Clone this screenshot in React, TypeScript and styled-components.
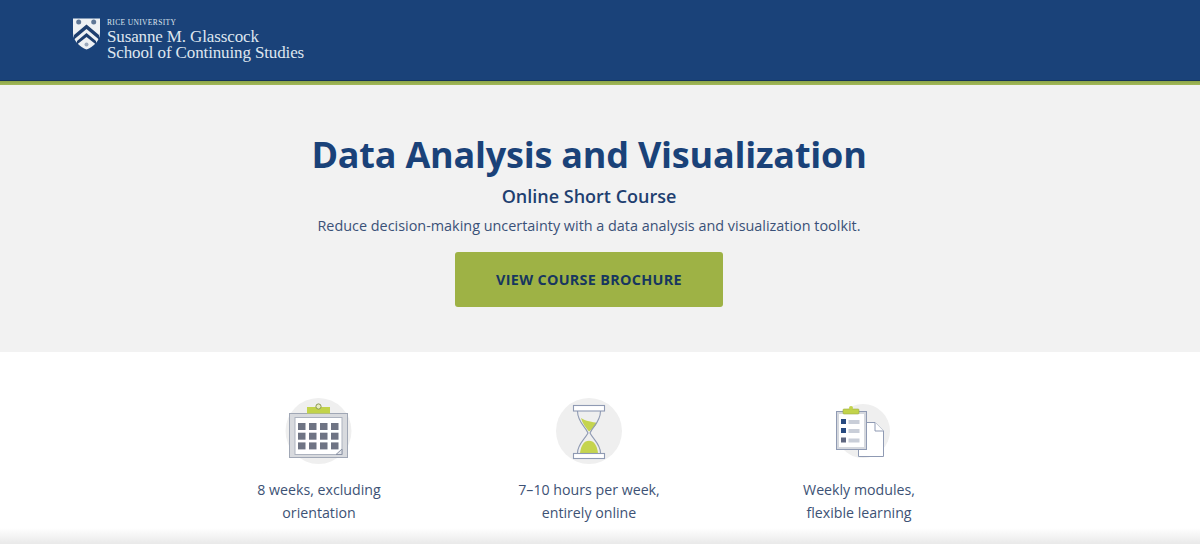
import React from "react";
import styled, { createGlobalStyle } from "styled-components";

const Global = createGlobalStyle`
  html, body { margin: 0; padding: 0; background: #fff; }
  body { font-family: "Open Sans", "Liberation Sans", sans-serif; overflow: hidden; }
`;
const Page = styled.div`
  width: 1200px; height: 544px; overflow: hidden; position: relative;
  display: flex; flex-direction: column;
`;
const Header = styled.header`
  height: 81px; flex: none; box-sizing: border-box; background: #1a4279;
  border-bottom: 1px solid #163459;
  display: flex; align-items: flex-start; padding: 18px 0 0 73px; gap: 7px;
`;
const Strip = styled.div`
  height: 4px; flex: none; background: linear-gradient(to bottom, #8ea648, #a3b95a);
`;
const Wordmark = styled.div`
  display: flex; flex-direction: column; color: #dfe6ef;
  font-family: "Liberation Serif", serif;
`;
const Uni = styled.span`
  font-size: 7.5px; line-height: 8px; letter-spacing: 0.35px; margin-top: 1px; margin-bottom: 2px;
`;
const Line = styled.span`
  font-size: 17px; line-height: 16px; letter-spacing: -0.13px; white-space: nowrap;
`;
const Hero = styled.section`
  height: 267px; flex: none; background: #f2f2f2; box-sizing: border-box;
  display: flex; flex-direction: column; align-items: center;
  padding: 41px 22px 0 0; color: #1a4279;
`;
const Title = styled.h1`
  margin: 0; font-size: 36px; line-height: 58px; font-weight: 700; letter-spacing: -0.22px;
`;
const Sub = styled.h2`
  margin: -1px 0 0; font-size: 18px; line-height: 26px; font-weight: 600; color: #1f3f70;
`;
const Lead = styled.p`
  margin: 4px 0 0; font-size: 14.4px; line-height: 26px; color: #3a5178;
`;
const Cta = styled.a`
  margin-top: 13px; width: 268px; height: 55px; background: #9eb245; border-radius: 3px;
  display: flex; align-items: center; justify-content: center;
  font-size: 14.4px; font-weight: 700; color: #17365f; letter-spacing: 0.3px;
`;
const Facts = styled.section`
  display: grid; grid-template-columns: repeat(3, 270px); justify-content: start;
  padding: 46px 0 0 184px;
`;
const Fact = styled.div`
  display: flex; flex-direction: column; align-items: center; color: #3d5275;
  font-size: 14.2px; line-height: 23px; text-align: center;
`;
const IconBox = styled.svg`
  width: 80px; height: 70px; margin-bottom: 10px; display: block;
`;
const Fade = styled.div`
  position: absolute; left: 0; right: 0; bottom: 0; height: 16px;
  background: linear-gradient(to bottom, rgba(232,232,232,0), #e9e9e9);
`;

const Crest = () => (
  <svg width="27" height="32" viewBox="0 0 27 32" style={{ flex: "none" }}>
    <path d="M0 0.5 H27 V15 C27 23 20 29 13.5 31.5 C7 29 0 23 0 15 Z" fill="#eef1f4" />
    <path d="M1 17 L13.5 6.5 L26 17 V21.5 L13.5 11 L1 21.5 Z" fill="#1f3f6f" />
    <path d="M4 23 L13.5 15 L23 23 V26.5 L13.5 19 L4 26.5 Z" fill="#1f3f6f" />
    <circle cx="5.7" cy="4" r="2.5" fill="#5f7796" />
    <circle cx="20.7" cy="4" r="2.5" fill="#5f7796" />
    <circle cx="13.5" cy="26.5" r="2" fill="#9aa8bb" />
  </svg>
);

const Calendar = () => (
  <IconBox viewBox="0 0 80 70">
    <circle cx="39.5" cy="33" r="33" fill="#efefef" />
    <rect x="10.5" y="15.5" width="58" height="44" fill="#d8dade" stroke="#a0a7b5" />
    <rect x="16" y="19.5" width="47" height="37" fill="#fff" stroke="#adb3bf" />
    <rect x="28" y="9" width="23" height="6.5" fill="#c2d34a" />
    <circle cx="39.5" cy="8.5" r="2.6" fill="#e8edc0" stroke="#8a9850" />
    {[0, 1, 2].map((r) =>
      [0, 1, 2, 3].map((c) => (
        <rect key={`${r}-${c}`} x={19 + c * 11} y={25 + r * 9.7} width="7.5" height="7" fill="#6f7484" />
      ))
    )}
    <path d="M57 56.5 L63 51 V56.5 Z" fill="#e3e5ea" stroke="#8b93a5" />
  </IconBox>
);

const Hourglass = () => (
  <IconBox viewBox="0 0 80 70">
    <circle cx="40" cy="33" r="33" fill="#efefef" />
    <path d="M32 20 C36 23 44 24 48 25 C46.5 29 43 31 40 33.5 C36.5 29 33 25 32 20 Z" fill="#c5d44f" />
    <path d="M31 55 C32 47 35 42.7 40 42.7 C45 42.7 48 47 49 55 Z" fill="#c5d44f" />
    <path d="M28.5 13 C28.5 24 36 28 39 35 C36 41 28.5 46 28.5 55 M51.5 13 C51.5 24 44 28 41 35 C44 41 51.5 46 51.5 55" fill="none" stroke="#8f9ab3" strokeWidth="1.1" />
    <rect x="24.5" y="7.5" width="31" height="5.5" fill="#fff" stroke="#8f9ab3" strokeWidth="1.1" />
    <rect x="24.5" y="55.5" width="31" height="5" fill="#fff" stroke="#8f9ab3" strokeWidth="1.1" />
  </IconBox>
);

const Modules = () => (
  <IconBox viewBox="0 0 80 70">
    <circle cx="44" cy="33" r="27" fill="#efefef" />
    <path d="M39.5 24.5 H56 L64.5 33 V58.5 H39.5 Z" fill="#fff" stroke="#8f9ab3" />
    <path d="M56 24.5 V33 H64.5" fill="#fff" stroke="#8f9ab3" />
    <rect x="17.5" y="13.5" width="30" height="38" fill="#d5d8de" stroke="#8f9ab3" />
    <rect x="20" y="16" width="25" height="33" fill="#fff" />
    <rect x="24" y="11" width="16" height="5" rx="1" fill="#c2d34a" stroke="#9aad44" strokeWidth="0.6" />
    <circle cx="32" cy="10" r="2" fill="#c2d34a" />
    <rect x="22" y="21" width="5" height="5" fill="#284a80" />
    <rect x="22" y="30" width="5" height="5" fill="#284a80" />
    <rect x="22" y="39.5" width="5" height="5" fill="#5f6780" />
    <rect x="29.5" y="22" width="11" height="4" fill="#c9ced8" />
    <rect x="29.5" y="31" width="11" height="4" fill="#c9ced8" />
    <rect x="29.5" y="40.5" width="11" height="4" fill="#c9ced8" />
  </IconBox>
);

export default function App() {
  return (
    <Page>
      <Global />
      <Header>
        <Crest />
        <Wordmark>
          <Uni>RICE UNIVERSITY</Uni>
          <Line>Susanne M. Glasscock</Line>
          <Line>School of Continuing Studies</Line>
        </Wordmark>
      </Header>
      <Strip />
      <Hero>
        <Title>Data Analysis and Visualization</Title>
        <Sub>Online Short Course</Sub>
        <Lead>Reduce decision-making uncertainty with a data analysis and visualization toolkit.</Lead>
        <Cta>VIEW COURSE BROCHURE</Cta>
      </Hero>
      <Facts>
        <Fact><Calendar /><span>8 weeks, excluding</span><span>orientation</span></Fact>
        <Fact><Hourglass /><span>7–10 hours per week,</span><span>entirely online</span></Fact>
        <Fact><Modules /><span>Weekly modules,</span><span>flexible learning</span></Fact>
      </Facts>
      <Fade />
    </Page>
  );
}
